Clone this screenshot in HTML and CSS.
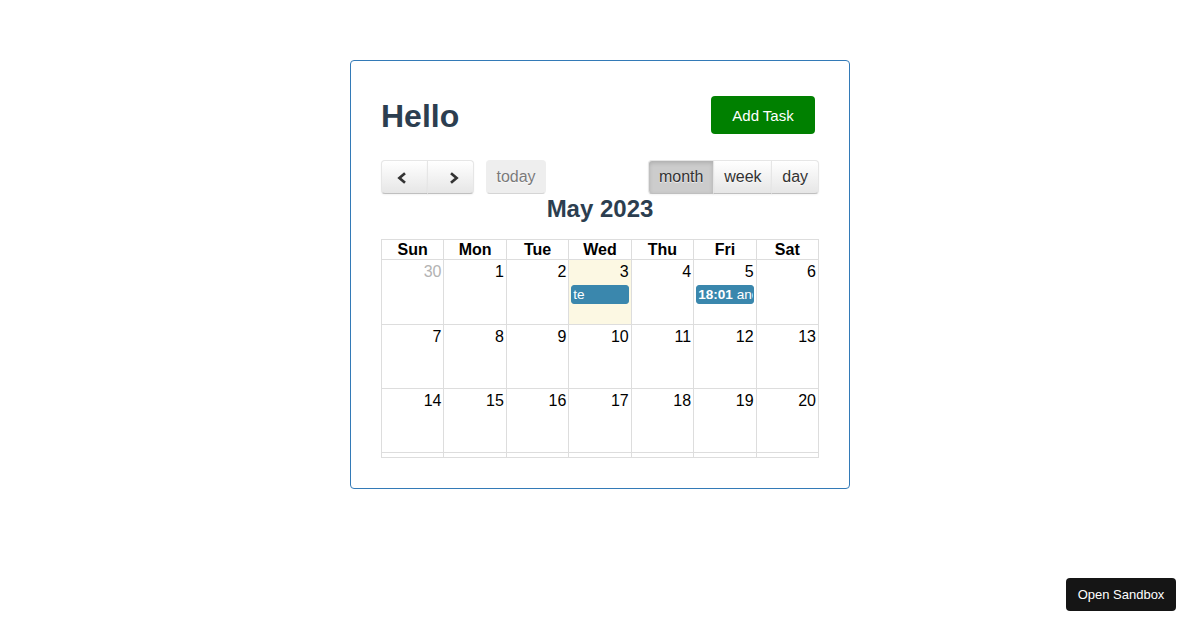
FILE: index.html
```html
<!DOCTYPE html>
<html lang="en">
<head>
<meta charset="utf-8">
<title>Hello</title>
<link rel="stylesheet" href="styles.css">
</head>
<body>
<div class="card">
  <div class="card-head">
    <h1 class="title">Hello</h1>
    <button class="btn-add">Add Task</button>
  </div>
  <div class="toolbar">
    <div class="tb-left">
      <div class="btn-group">
        <button class="fc-btn fc-first fc-arrow" aria-label="prev">
          <svg class="chev chev-l" width="10" height="12" viewBox="0 0 10 12"><path d="M8 1.2 L2.4 6 L8 10.8" fill="none" stroke="#333" stroke-width="2.7"/></svg>
        </button>
        <button class="fc-btn fc-last fc-arrow" aria-label="next">
          <svg class="chev chev-r" width="10" height="12" viewBox="0 0 10 12"><path d="M2 1.2 L7.6 6 L2 10.8" fill="none" stroke="#333" stroke-width="2.7"/></svg>
        </button>
      </div>
      <button class="fc-btn fc-single fc-disabled">today</button>
    </div>
    <div class="btn-group">
      <button class="fc-btn fc-first fc-active">month</button>
      <button class="fc-btn">week</button>
      <button class="fc-btn fc-last">day</button>
    </div>
  </div>
  <h2 class="month-title">May 2023</h2>
  <div class="cal">
    <div class="cal-head">
      <div class="hcell">Sun</div><div class="hcell">Mon</div><div class="hcell">Tue</div><div class="hcell">Wed</div><div class="hcell">Thu</div><div class="hcell">Fri</div><div class="hcell">Sat</div>
    </div>
    <div class="cal-body">
      <div class="week">
        <div class="day other"><span class="num">30</span></div>
        <div class="day"><span class="num">1</span></div>
        <div class="day"><span class="num">2</span></div>
        <div class="day today"><span class="num">3</span><div class="event">te</div></div>
        <div class="day"><span class="num">4</span></div>
        <div class="day"><span class="num">5</span><div class="event"><b>18:01</b> and</div></div>
        <div class="day"><span class="num">6</span></div>
      </div>
      <div class="week">
        <div class="day"><span class="num">7</span></div>
        <div class="day"><span class="num">8</span></div>
        <div class="day"><span class="num">9</span></div>
        <div class="day"><span class="num">10</span></div>
        <div class="day"><span class="num">11</span></div>
        <div class="day"><span class="num">12</span></div>
        <div class="day"><span class="num">13</span></div>
      </div>
      <div class="week">
        <div class="day"><span class="num">14</span></div>
        <div class="day"><span class="num">15</span></div>
        <div class="day"><span class="num">16</span></div>
        <div class="day"><span class="num">17</span></div>
        <div class="day"><span class="num">18</span></div>
        <div class="day"><span class="num">19</span></div>
        <div class="day"><span class="num">20</span></div>
      </div>
      <div class="week">
        <div class="day"></div>
        <div class="day"></div>
        <div class="day"></div>
        <div class="day"></div>
        <div class="day"></div>
        <div class="day"></div>
        <div class="day"></div>
      </div>
    </div>
  </div>
</div>
<button class="sandbox">Open Sandbox</button>
</body>
</html>
```

FILE: styles.css
```css
* { box-sizing: border-box; }
html, body { margin: 0; padding: 0; background: #fff; }
body {
  font-family: "Liberation Sans", Arial, Helvetica, sans-serif;
  font-size: 16px;
  color: #000;
  width: 1200px;
  height: 630px;
  overflow: hidden;
}
.card {
  width: 500px;
  margin: 60px auto 0;
  border: 1px solid #337ab7;
  border-radius: 4px;
  padding: 35px 30px 30px;
}
.card-head {
  display: flex;
  align-items: center;
  justify-content: space-between;
  height: 38px;
}
.title {
  margin: 0;
  font-size: 32px;
  font-weight: bold;
  color: #2c3e50;
  line-height: 38px;
  position: relative;
  top: 1px;
}
.btn-add {
  font-family: inherit;
  font-size: 15px;
  background: #008000;
  color: #fff;
  border: none;
  border-radius: 4px;
  height: 38px;
  width: 104px;
  padding: 0;
  margin-right: 4px;
}
.toolbar {
  margin-top: 26px;
  display: flex;
  justify-content: space-between;
  align-items: flex-start;
  height: 34px;
}
.tb-left { display: flex; gap: 13px; }
.btn-group { display: flex; }
.fc-btn {
  font-family: inherit;
  font-size: 16px;
  height: 34px;
  padding: 0 9.9px;
  color: #333;
  background-color: #f5f5f5;
  background-image: linear-gradient(to bottom, #fff, #e6e6e6);
  border: 1px solid;
  border-color: #e6e6e6 #e6e6e6 #bfbfbf;
  border-radius: 0;
  box-shadow: inset 0 1px 0 rgba(255,255,255,.2), 0 1px 2px rgba(0,0,0,.05);
  text-shadow: 0 1px 1px rgba(255,255,255,.75);
  margin-left: -1px;
  display: flex;
  align-items: center;
  justify-content: center;
}
.btn-group .fc-btn:first-child { margin-left: 0; }
.fc-first { border-radius: 4px 0 0 4px; }
.fc-last { border-radius: 0 4px 4px 0; }
.fc-single { border-radius: 4px; }
.fc-arrow { width: 47px; padding: 0; }
.chev { display: block; }
.chev-l { margin-right: 6px; margin-top: 1px; }
.chev-r { margin-left: 6px; margin-top: 1px; }
.fc-disabled {
  opacity: .65;
  background-image: none;
  background-color: #e6e6e6;
  box-shadow: none;
  width: 60px;
}
.fc-active {
  background-color: #ccc;
  background-image: none;
  box-shadow: inset 0 2px 4px rgba(0,0,0,.15), 0 1px 2px rgba(0,0,0,.05);
  z-index: 1;
}
.month-title {
  margin: 2px 0 17px;
  font-size: 24px;
  line-height: 26px;
  text-align: center;
  color: #2c3e50;
  font-weight: bold;
}
.cal {
  border: 1px solid #ddd;
  border-right: none;
  width: 438px;
}
.cal-head {
  display: grid;
  grid-template-columns: repeat(7, 1fr);
  border-bottom: 1px solid #ddd;
}
.hcell {
  height: 19px;
  line-height: 19px;
  text-align: center;
  font-weight: bold;
  border-right: 1px solid #ddd;
}
.cal-body {
  height: 197px;
  overflow: hidden;
}
.week {
  display: grid;
  grid-template-columns: repeat(7, 1fr);
  border-bottom: 1px solid #ddd;
  height: 64px;
}
.week:first-child { height: 65px; }
.day {
  border-right: 1px solid #ddd;
  padding: 2px 1px 0;
  display: flex;
  flex-direction: column;
  min-width: 0;
}
.num {
  text-align: right;
  line-height: 19px;
  padding-right: 1px;
}
.other .num { color: #b3b3b3; }
.today { background: #fcf8e3; }
.event {
  margin: 4px 1px 0;
  background: #3a87ad;
  border: 1px solid #3a87ad;
  border-radius: 3px;
  color: #fff;
  font-size: 13.6px;
  line-height: 17px;
  padding: 0 1px;
  white-space: nowrap;
  overflow: hidden;
}
.sandbox {
  position: fixed;
  right: 24px;
  bottom: 19px;
  width: 110px;
  height: 33px;
  background: #151515;
  color: #fff;
  border: none;
  border-radius: 4px;
  font-family: "Liberation Sans", Arial, sans-serif;
  font-size: 13px;
  padding: 0;
}
```
